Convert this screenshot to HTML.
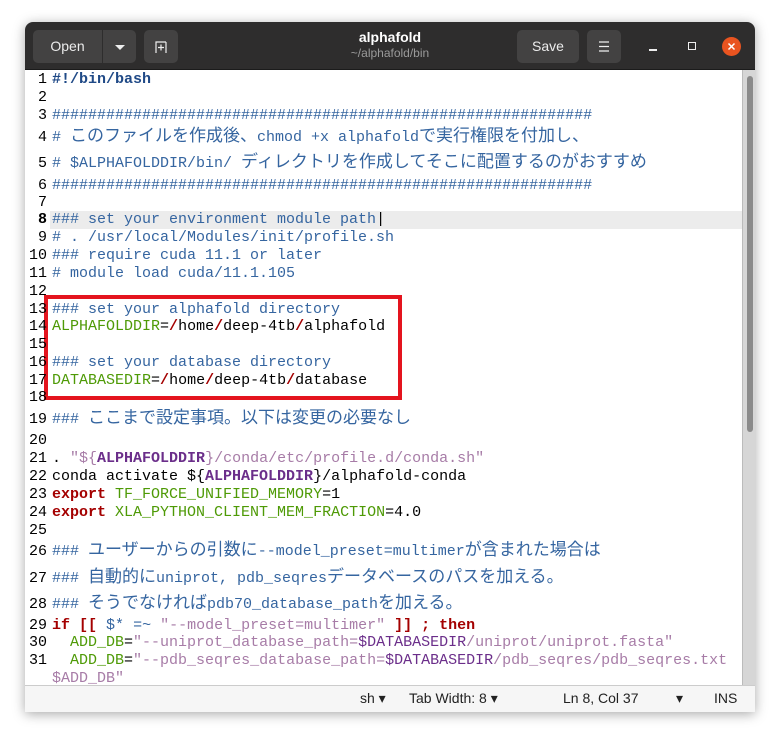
<!DOCTYPE html>
<html><head><meta charset="utf-8"><style>
*{margin:0;padding:0;box-sizing:border-box}
body{width:781px;height:741px;background:#fff;position:relative;overflow:hidden;font-family:"Liberation Sans","Noto Sans CJK JP",sans-serif}
.win{position:absolute;left:25px;top:22px;width:730px;height:690px;background:#fff;border-radius:8px 8px 0 0;box-shadow:0 2px 12px rgba(0,0,0,.35);overflow:hidden}
.hdr{position:absolute;left:0;top:0;width:730px;height:48px;background:#2e2d2d;border-bottom:1px solid #1b1b1b}
.btn{position:absolute;top:8px;height:33px;background:#434242;border-radius:5px;color:#ececec;font-size:14px;line-height:33px;text-align:center}
.title{position:absolute;left:0;width:730px;text-align:center;color:#fff}
.ed{position:absolute;left:0;top:48px;width:717px;height:615px;background:#fff;overflow:hidden}
.ln{position:absolute;left:0;height:18px;line-height:18px;font-family:"Liberation Mono","DejaVu Sans Mono","Noto Sans CJK JP",monospace;font-size:15px;white-space:pre;color:#000}
.n{position:absolute;left:0;width:22px;text-align:right;color:#000}
.t{position:absolute;left:27px}
.c{color:#3565a0}
.j{font-family:"Noto Sans CJK JP",sans-serif;font-size:17px;line-height:0;vertical-align:baseline}
.g{color:#4e9a06}
.s{color:#a77ca7}
.r{color:#a40000;font-weight:bold}
.b{font-weight:bold}
.p{color:#6b2e8a;font-weight:bold}
.sb{position:absolute;left:717px;top:48px;width:13px;height:615px;background:#d6d6d6;border-left:1px solid #bbb}
.th{position:absolute;left:4px;top:6px;width:6px;height:356px;background:#8a8a8a;border-radius:3px}
.st{position:absolute;left:0;top:663px;width:730px;height:27px;background:#f6f6f6;border-top:1px solid #ccc;font-size:14px;color:#222}
.st span{position:absolute;top:4px}
</style></head><body>
<div class="win">
 <div class="hdr">
  <div class="btn" style="left:8px;width:69px;border-radius:5px 0 0 5px">Open</div>
  <div class="btn" style="left:78px;width:33px;border-radius:0 5px 5px 0"><span style="display:inline-block;width:0;height:0;border-left:5px solid transparent;border-right:5px solid transparent;border-top:5px solid #eee;vertical-align:middle"></span></div>
  <div class="btn" style="left:119px;width:34px"><svg width="34" height="33"><path d="M12 23V12h10M22 12v11M14 17.5h6M17 14.5v6" stroke="#eee" fill="none" stroke-width="1.2"/></svg></div>
  <div class="title" style="top:7px;font-size:14px;font-weight:bold">alphafold</div>
  <div class="title" style="top:24px;font-size:12px;color:#9a9a9a">~/alphafold/bin</div>
  <div class="btn" style="left:492px;width:62px">Save</div>
  <div class="btn" style="left:562px;width:34px"><svg width="34" height="33"><path d="M12 12h10M12 16.5h10M12 21h10" stroke="#eee" stroke-width="1.3"/></svg></div>
  <div style="position:absolute;left:624px;top:27px;width:8px;height:1.5px;background:#eee"></div>
  <div style="position:absolute;left:663px;top:20px;width:8px;height:8px;border:1.5px solid #eee"></div>
  <div style="position:absolute;left:697px;top:15px;width:19px;height:19px;border-radius:50%;background:#e95420"><svg width="19" height="19"><path d="M6.5 6.5l6 6M12.5 6.5l-6 6" stroke="#fff" stroke-width="1.5"/></svg></div>
 </div>
 <div class="ed">
  <div style="position:absolute;left:25px;top:141px;width:692px;height:18px;background:#ececec"></div>
  <div style="position:absolute;left:19px;top:225px;width:358px;height:105px;border:4px solid #e4141e"></div>
<div class="ln" style="top:1px"><span class="n">1</span><span class="t b" style="color:#204a87">#!/bin/bash</span></div>
<div class="ln" style="top:19px"><span class="n">2</span></div>
<div class="ln" style="top:37px"><span class="n">3</span><span class="t c">############################################################</span></div>
<div class="ln" style="top:59px"><span class="n">4</span><span class="t c"># <span class="j">このファイルを作成後、</span>chmod +x alphafold<span class="j">で実行権限を付加し、</span></span></div>
<div class="ln" style="top:85px"><span class="n">5</span><span class="t c"># $ALPHAFOLDDIR/bin/ <span class="j">ディレクトリを作成してそこに配置するのがおすすめ</span></span></div>
<div class="ln" style="top:107px"><span class="n">6</span><span class="t c">############################################################</span></div>
<div class="ln" style="top:124px"><span class="n">7</span></div>
<div class="ln" style="top:141px"><span class="n b">8</span><span class="t c">### set your environment module path<span style="color:#000">|</span></span></div>
<div class="ln" style="top:159px"><span class="n">9</span><span class="t c"># . /usr/local/Modules/init/profile.sh</span></div>
<div class="ln" style="top:177px"><span class="n">10</span><span class="t c">### require cuda 11.1 or later</span></div>
<div class="ln" style="top:195px"><span class="n">11</span><span class="t c"># module load cuda/11.1.105</span></div>
<div class="ln" style="top:213px"><span class="n">12</span></div>
<div class="ln" style="top:231px"><span class="n">13</span><span class="t c">### set your alphafold directory</span></div>
<div class="ln" style="top:248px"><span class="n">14</span><span class="t"><span class="g">ALPHAFOLDDIR</span>=<span class="r">/</span>home<span class="r">/</span>deep-4tb<span class="r">/</span>alphafold</span></div>
<div class="ln" style="top:266px"><span class="n">15</span></div>
<div class="ln" style="top:284px"><span class="n">16</span><span class="t c">### set your database directory</span></div>
<div class="ln" style="top:302px"><span class="n">17</span><span class="t"><span class="g">DATABASEDIR</span>=<span class="r">/</span>home<span class="r">/</span>deep-4tb<span class="r">/</span>database</span></div>
<div class="ln" style="top:319px"><span class="n">18</span></div>
<div class="ln" style="top:341px"><span class="n">19</span><span class="t c">### <span class="j">ここまで設定事項。以下は変更の必要なし</span></span></div>
<div class="ln" style="top:362px"><span class="n">20</span></div>
<div class="ln" style="top:380px"><span class="n">21</span><span class="t">. <span class="s">"${<span class="p">ALPHAFOLDDIR</span>}/conda/etc/profile.d/conda.sh"</span></span></div>
<div class="ln" style="top:398px"><span class="n">22</span><span class="t">conda activate ${<span class="p">ALPHAFOLDDIR</span>}/alphafold-conda</span></div>
<div class="ln" style="top:416px"><span class="n">23</span><span class="t"><span class="r">export</span> <span class="g">TF_FORCE_UNIFIED_MEMORY</span>=1</span></div>
<div class="ln" style="top:434px"><span class="n">24</span><span class="t"><span class="r">export</span> <span class="g">XLA_PYTHON_CLIENT_MEM_FRACTION</span>=4.0</span></div>
<div class="ln" style="top:452px"><span class="n">25</span></div>
<div class="ln" style="top:473px"><span class="n">26</span><span class="t c">### <span class="j">ユーザーからの引数に</span>--model_preset=multimer<span class="j">が含まれた場合は</span></span></div>
<div class="ln" style="top:500px"><span class="n">27</span><span class="t c">### <span class="j">自動的に</span>uniprot, pdb_seqres<span class="j">データベースのパスを加える。</span></span></div>
<div class="ln" style="top:526px"><span class="n">28</span><span class="t c">### <span class="j">そうでなければ</span>pdb70_database_path<span class="j">を加える。</span></span></div>
<div class="ln" style="top:547px"><span class="n">29</span><span class="t"><span class="r">if [[</span> <span class="c">$*</span> <span class="c">=~</span> <span class="s">"--model_preset=multimer"</span> <span class="r">]] ; then</span></span></div>
<div class="ln" style="top:564px"><span class="n">30</span><span class="t">  <span class="g">ADD_DB</span>=<span class="s">"--uniprot_database_path=</span><span style="color:#6b2e8a">$DATABASEDIR</span><span class="s">/uniprot/uniprot.fasta"</span></span></div>
<div class="ln" style="top:582px"><span class="n">31</span><span class="t">  <span class="g">ADD_DB</span>=<span class="s">"--pdb_seqres_database_path=</span><span style="color:#6b2e8a">$DATABASEDIR</span><span class="s">/pdb_seqres/pdb_seqres.txt</span></span></div>
<div class="ln" style="top:600px"><span class="t s">$ADD_DB"</span></div>
 </div>
 <div class="sb"><div class="th"></div></div>
 <div class="st">
  <span style="left:335px">sh ▾</span>
  <span style="left:384px">Tab Width: 8 ▾</span>
  <span style="left:538px">Ln 8, Col 37</span>
  <span style="left:651px">▾</span>
  <span style="left:689px">INS</span>
 </div>
</div>
</body></html>
